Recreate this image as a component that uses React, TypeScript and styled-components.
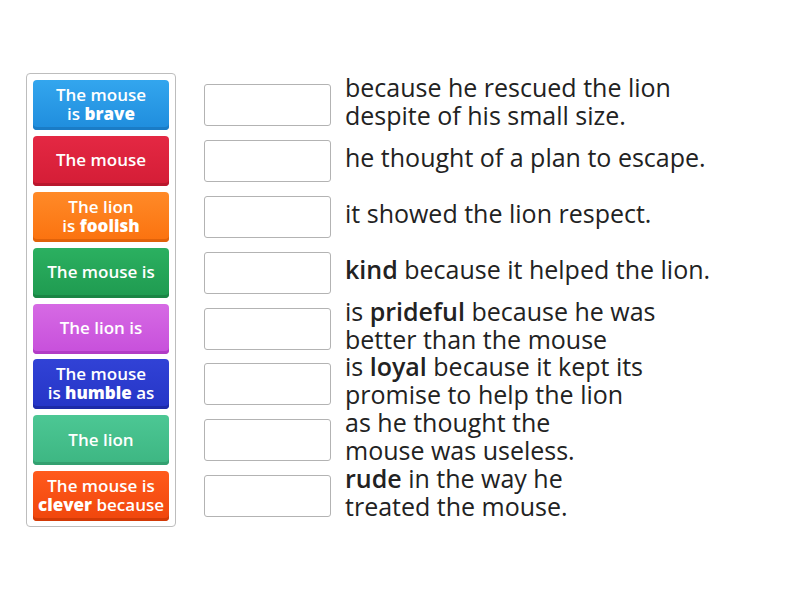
import styled, { createGlobalStyle } from 'styled-components';

interface TileData {
  top: string;
  bottom: string;
  edge: string;
  lines: React.ReactNode[];
}

interface RowData {
  lines: React.ReactNode[];
}

const GlobalStyle = createGlobalStyle`
  html, body {
    margin: 0;
    padding: 0;
    background: #ffffff;
  }
  body {
    font-family: "Open Sans", "Noto Sans", sans-serif;
  }
`;

const Page = styled.div`
  width: 800px;
  height: 600px;
  box-sizing: border-box;
  padding: 73px 0 0 26px;
  display: flex;
  align-items: flex-start;
  gap: 28px;
`;

const Panel = styled.div`
  width: 150px;
  box-sizing: border-box;
  border: 1px solid #bdbdbd;
  border-radius: 4px;
  padding: 6px 6px 5px 6px;
  display: flex;
  flex-direction: column;
  gap: 5.9px;
  background: #ffffff;
`;

const Tile = styled.div<{ $top: string; $bottom: string; $edge: string }>`
  height: 50px;
  border-radius: 4px;
  background: linear-gradient(${({ $top }) => $top}, ${({ $bottom }) => $bottom});
  box-shadow: inset 0 -3px 0 ${({ $edge }) => $edge};
  display: flex;
  flex-direction: column;
  align-items: center;
  justify-content: center;
  color: #ffffff;
  font-size: 17px;
  font-weight: 600;
  line-height: 19px;
  text-align: center;
  padding-bottom: 2px;
  box-sizing: border-box;
`;

const TileLine = styled.span`
  white-space: nowrap;
  b {
    font-weight: 800;
  }
`;

const Answers = styled.div`
  padding-top: 7px;
  display: flex;
  flex-direction: column;
  gap: 5.9px;
`;

const Row = styled.div`
  height: 50px;
  display: flex;
  align-items: center;
  gap: 14px;
`;

const DropBox = styled.div`
  width: 127px;
  height: 42px;
  box-sizing: border-box;
  border: 1px solid #b3b3b3;
  border-radius: 3px;
  background: #ffffff;
  flex-shrink: 0;
`;

const Phrase = styled.div`
  color: #222222;
  font-size: 25px;
  line-height: 28px;
  margin-top: -8px;
  display: flex;
  flex-direction: column;
  b {
    font-weight: 600;
  }
`;

const PhraseLine = styled.span`
  white-space: nowrap;
`;

const tiles: TileData[] = [
  { top: '#33a6ee', bottom: '#1f8ddd', edge: '#1a7cc6', lines: ['The mouse', <>is <b>brave</b></>] },
  { top: '#e42843', bottom: '#d41d36', edge: '#b9172d', lines: ['The mouse'] },
  { top: '#ff8a28', bottom: '#fb720f', edge: '#e0620a', lines: ['The lion', <>is <b>foolish</b></>] },
  { top: '#2bb060', bottom: '#1f9a50', edge: '#1a8544', lines: ['The mouse is'] },
  { top: '#d66ae4', bottom: '#c74fdb', edge: '#b23cc6', lines: ['The lion is'] },
  { top: '#3142d6', bottom: '#2535c6', edge: '#1d2aa8', lines: ['The mouse', <>is <b>humble</b> as</>] },
  { top: '#4cc794', bottom: '#3db682', edge: '#33a070', lines: ['The lion'] },
  { top: '#ff5a1c', bottom: '#f0460c', edge: '#d23a06', lines: ['The mouse is', <><b>clever</b> because</>] },
];

const rows: RowData[] = [
  { lines: ['because he rescued the lion', 'despite of his small size.'] },
  { lines: ['he thought of a plan to escape.'] },
  { lines: ['it showed the lion respect.'] },
  { lines: [<><b>kind</b> because it helped the lion.</>] },
  { lines: [<>is <b>prideful</b> because he was</>, 'better than the mouse'] },
  { lines: [<>is <b>loyal</b> because it kept its</>, 'promise to help the lion'] },
  { lines: ['as he thought the', 'mouse was useless.'] },
  { lines: [<><b>rude</b> in the way he</>, 'treated the mouse.'] },
];

const App = () => {
  return (
    <>
      <GlobalStyle />
      <Page>
        <Panel>
          {tiles.map((tile, i) => (
            <Tile key={i} $top={tile.top} $bottom={tile.bottom} $edge={tile.edge}>
              {tile.lines.map((line, j) => (
                <TileLine key={j}>{line}</TileLine>
              ))}
            </Tile>
          ))}
        </Panel>
        <Answers>
          {rows.map((row, i) => (
            <Row key={i}>
              <DropBox />
              <Phrase>
                {row.lines.map((line, j) => (
                  <PhraseLine key={j}>{line}</PhraseLine>
                ))}
              </Phrase>
            </Row>
          ))}
        </Answers>
      </Page>
    </>
  );
};

export default App;
